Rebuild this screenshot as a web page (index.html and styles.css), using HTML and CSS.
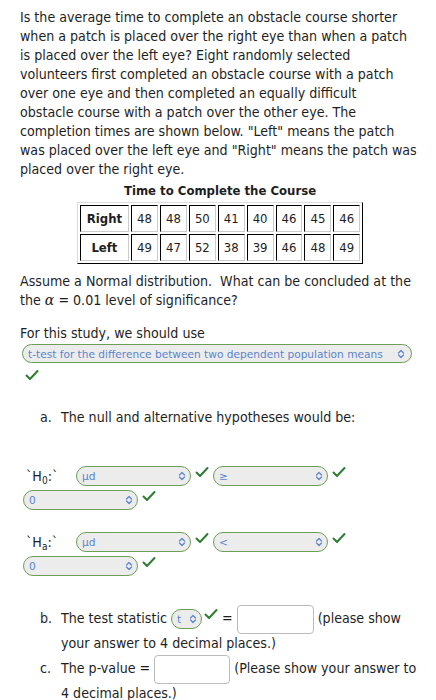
FILE: index.html
```html
<!DOCTYPE html>
<html>
<head>
<meta charset="utf-8">
<link rel="stylesheet" href="styles.css">
</head>
<body>
<div class="page">
  <p class="intro">Is the average time to complete an obstacle course shorter<br>when a patch is placed over the right eye than when a patch<br>is placed over the left eye? Eight randomly selected<br>volunteers first completed an obstacle course with a patch<br>over one eye and then completed an equally difficult<br>obstacle course with a patch over the other eye. The<br>completion times are shown below. "Left" means the patch<br>was placed over the left eye and "Right" means the patch was<br>placed over the right eye.</p>

  <div class="table-wrap">
    <div class="caption">Time to Complete the Course</div>
    <table class="data">
      <tr><th>Right</th><td>48</td><td>48</td><td>50</td><td>41</td><td>40</td><td>46</td><td>45</td><td>46</td></tr>
      <tr><th>Left</th><td>49</td><td>47</td><td>52</td><td>38</td><td>39</td><td>46</td><td>48</td><td>49</td></tr>
    </table>
  </div>

  <p class="assume">Assume a Normal distribution.&nbsp; What can be concluded at the the <span class="math">α</span> = 0.01 level of significance?</p>

  <p class="study">For this study, we should use</p>
  <div class="sel sel-wide"><span>t-test for the difference between two dependent population means</span><svg class="arr" viewBox="0 0 8 10"><path d="M1.5 4 L4 1.5 L6.5 4 M1.5 6 L4 8.5 L6.5 6"/></svg></div>
  <div class="check-line"><svg class="chk" viewBox="0 0 14 12"><path d="M1.5 6.5 L5 10 L12.5 2"/></svg></div>

  <div class="item part-a"><span class="mk">a.</span><div class="body">The null and alternative hypotheses would be:</div></div>

  <div class="hyp">
    <div class="hrow">
      <span class="hlabel">`H<sub>0</sub>:`</span>
      <div class="sel sel-mid"><span>μd</span><svg class="arr" viewBox="0 0 8 10"><path d="M1.5 4 L4 1.5 L6.5 4 M1.5 6 L4 8.5 L6.5 6"/></svg></div>
      <svg class="chk" viewBox="0 0 14 12"><path d="M1.5 6.5 L5 10 L12.5 2"/></svg>
      <div class="sel sel-mid"><span>≥</span><svg class="arr" viewBox="0 0 8 10"><path d="M1.5 4 L4 1.5 L6.5 4 M1.5 6 L4 8.5 L6.5 6"/></svg></div>
      <svg class="chk" viewBox="0 0 14 12"><path d="M1.5 6.5 L5 10 L12.5 2"/></svg>
    </div>
    <div class="hrow second">
      <div class="sel sel-mid"><span>0</span><svg class="arr" viewBox="0 0 8 10"><path d="M1.5 4 L4 1.5 L6.5 4 M1.5 6 L4 8.5 L6.5 6"/></svg></div>
      <svg class="chk" viewBox="0 0 14 12"><path d="M1.5 6.5 L5 10 L12.5 2"/></svg>
    </div>
  </div>

  <div class="hyp hyp-a">
    <div class="hrow">
      <span class="hlabel">`H<sub>a</sub>:`</span>
      <div class="sel sel-mid"><span>μd</span><svg class="arr" viewBox="0 0 8 10"><path d="M1.5 4 L4 1.5 L6.5 4 M1.5 6 L4 8.5 L6.5 6"/></svg></div>
      <svg class="chk" viewBox="0 0 14 12"><path d="M1.5 6.5 L5 10 L12.5 2"/></svg>
      <div class="sel sel-mid"><span>&lt;</span><svg class="arr" viewBox="0 0 8 10"><path d="M1.5 4 L4 1.5 L6.5 4 M1.5 6 L4 8.5 L6.5 6"/></svg></div>
      <svg class="chk" viewBox="0 0 14 12"><path d="M1.5 6.5 L5 10 L12.5 2"/></svg>
    </div>
    <div class="hrow second">
      <div class="sel sel-mid"><span>0</span><svg class="arr" viewBox="0 0 8 10"><path d="M1.5 4 L4 1.5 L6.5 4 M1.5 6 L4 8.5 L6.5 6"/></svg></div>
      <svg class="chk" viewBox="0 0 14 12"><path d="M1.5 6.5 L5 10 L12.5 2"/></svg>
    </div>
  </div>

  <div class="bc">
    <div class="item"><span class="mk">b.</span><div class="body">The test statistic <span class="sel sel-t"><span>t</span><svg class="arr" viewBox="0 0 8 10"><path d="M1.5 4 L4 1.5 L6.5 4 M1.5 6 L4 8.5 L6.5 6"/></svg></span><svg class="chk inl" viewBox="0 0 14 12"><path d="M1.5 6.5 L5 10 L12.5 2"/></svg> = <span class="box box-b"></span> (please show your answer to 4 decimal places.)</div></div>
    <div class="item"><span class="mk">c.</span><div class="body">The p-value = <span class="box box-c"></span> (Please show your answer to 4 decimal places.)</div></div>
  </div>
</div>
</body>
</html>
```

FILE: styles.css
```css
* { box-sizing: border-box; }
body {
  margin: 0;
  background: #fff;
  color: #1e1e1e;
  font-family: "DejaVu Sans Condensed", "DejaVu Sans", sans-serif;
  font-stretch: condensed;
  font-size: 14.1px;
  line-height: 19px;
}
.page {
  padding: 8px 16px 0 20px;
}
p { margin: 0; }
.intro { margin-bottom: 3px; white-space: nowrap; }

.table-wrap {
  display: flex;
  flex-direction: column;
  align-items: center;
}
.caption {
  font-weight: bold;
  font-size: 13px;
  line-height: 18px;
  margin-bottom: 2px;
}
table.data {
  border: 1px outset #777;
  border-color: #ddd #444 #444 #ddd;
  border-spacing: 2px;
}
table.data th,
table.data td {
  border: 1px inset #888;
  border-color: #555 #ccc #ccc #555;
  padding: 3px 5px;
  height: 26px;
  font-size: 13px;
}
table.data th { padding: 3px 6px; }

.assume { margin-top: 8px; }
.math { font-family: "DejaVu Serif", serif; font-style: italic; font-stretch: normal; }
.study { margin-top: 14px; }

.sel {
  display: inline-flex;
  align-items: center;
  justify-content: space-between;
  height: 19px;
  border: 1.5px solid #6a9f55;
  border-radius: 10px;
  background: #ececec;
  color: #5b86cc;
  font-family: "DejaVu Sans", sans-serif;
  font-stretch: normal;
  font-size: 10.6px;
  line-height: 14px;
  padding: 0 4px 0 5px;
  vertical-align: middle;
}
.arr {
  width: 8px;
  height: 10px;
  fill: none;
  stroke: #5b86cc;
  stroke-width: 1.3;
  stroke-linecap: round;
  stroke-linejoin: round;
  flex: none;
}
.sel-wide {
  width: 390px;
  margin-left: 2px;
  margin-top: 1px;
  padding-right: 6px;
}
.check-line { height: 24px; padding: 4px 0 0 5px; }
.chk {
  width: 14px;
  height: 12px;
  fill: none;
  stroke: #2f7d32;
  stroke-width: 2;
  stroke-linecap: round;
  stroke-linejoin: round;
  flex: none;
}

.item {
  display: flex;
  padding-left: 20px;
}
.mk { width: 21px; flex: none; }
.body { flex: 1; }
.part-a { margin-top: 21px; }

.hyp { margin-top: 39px; }
.hyp-a { margin-top: 22px; }
.hrow {
  display: flex;
  align-items: center;
  gap: 4px;
  height: 20px;
}
.hrow.second { margin-top: 4px; padding-left: 3px; }
.hlabel {
  padding-left: 6px;
  width: 52px;
  line-height: 18px;
}
sub { font-size: 10px; vertical-align: -3px; line-height: 0; }
.sel-mid { width: 115px; height: 20px; }
.hrow .chk { margin-top: -8px; }

.bc { margin-top: 30px; }
.bc .item { line-height: 25px; }
.sel-t {
  width: 31px;
  height: 20px;
  padding: 0 4px 0 5px;
}
.chk.inl { vertical-align: 3px; margin-left: 2px; }
.box {
  display: inline-block;
  height: 29px;
  margin: -3px 0;
  border: 1px solid #bbb;
  border-radius: 4px;
  background: #fff;
  vertical-align: middle;
}
.box-b { width: 77px; }
.box-c { width: 76px; }
```
